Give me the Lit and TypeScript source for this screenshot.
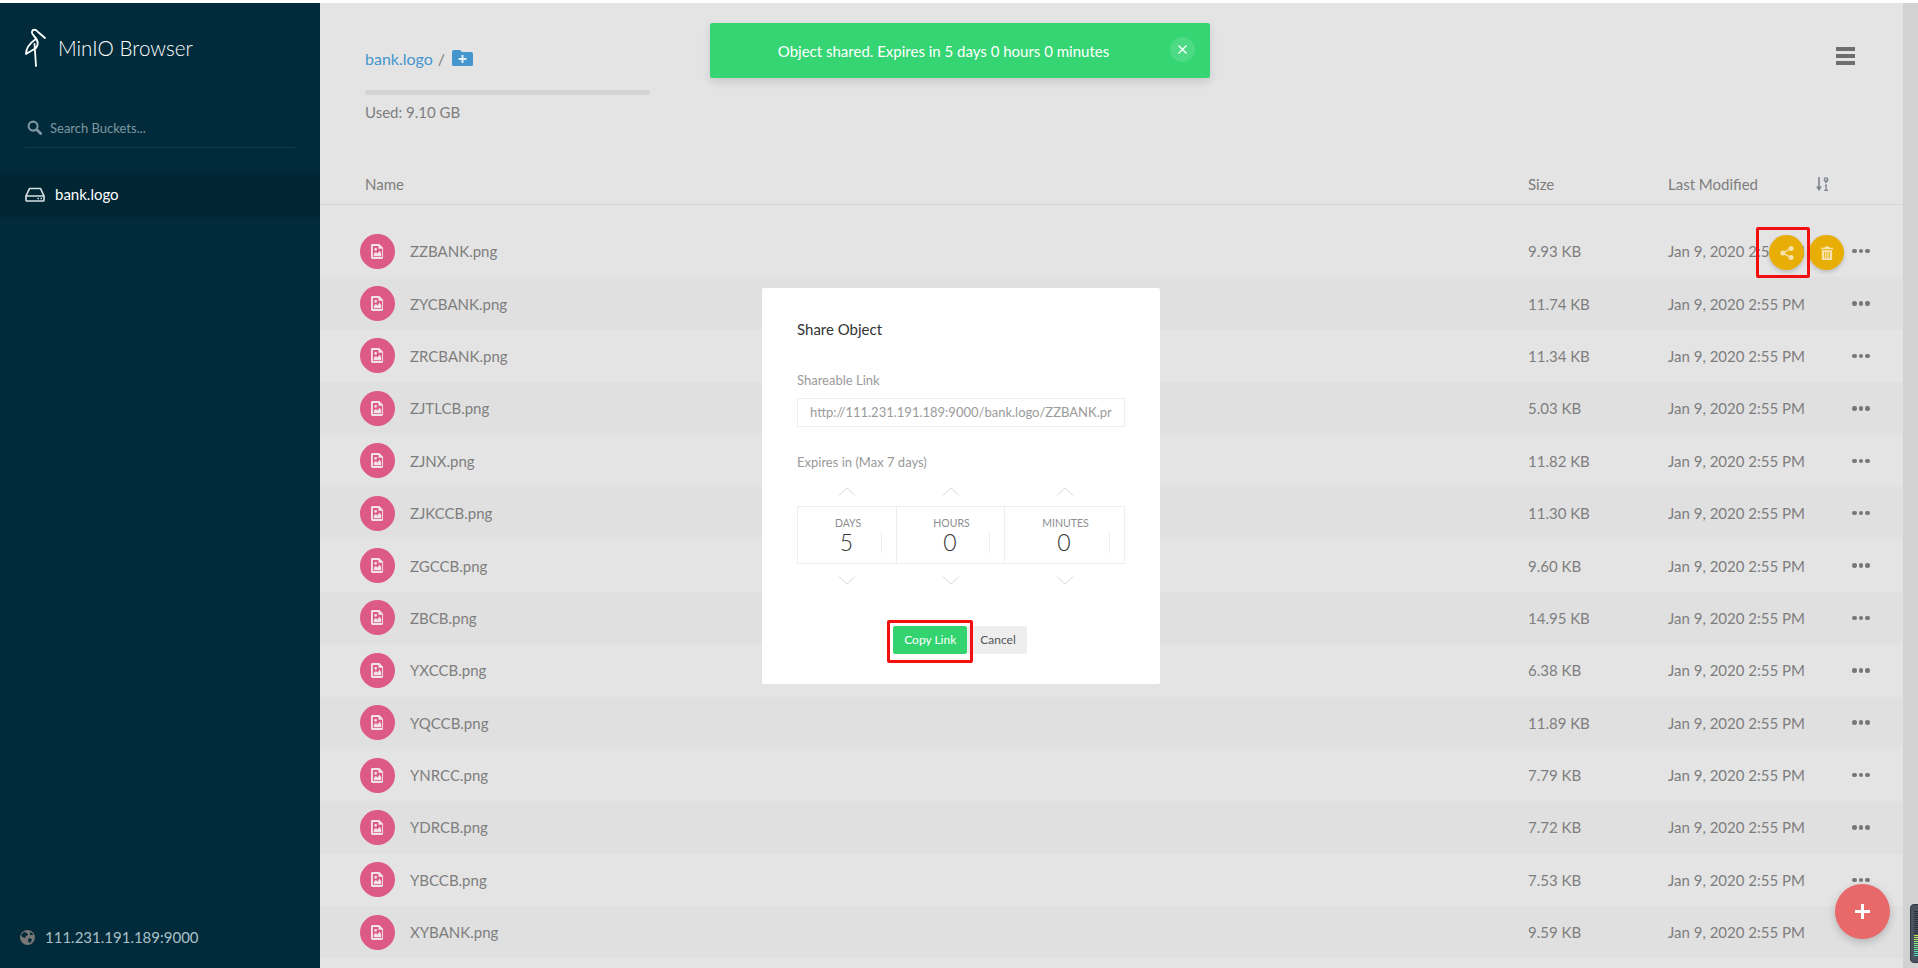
import { LitElement, css, html, svg } from "lit";
import { customElement } from "lit/decorators.js";

const FILES: [string, string][] = [
	["ZZBANK.png", "9.93 KB"],
	["ZYCBANK.png", "11.74 KB"],
	["ZRCBANK.png", "11.34 KB"],
	["ZJTLCB.png", "5.03 KB"],
	["ZJNX.png", "11.82 KB"],
	["ZJKCCB.png", "11.30 KB"],
	["ZGCCB.png", "9.60 KB"],
	["ZBCB.png", "14.95 KB"],
	["YXCCB.png", "6.38 KB"],
	["YQCCB.png", "11.89 KB"],
	["YNRCC.png", "7.79 KB"],
	["YDRCB.png", "7.72 KB"],
	["YBCCB.png", "7.53 KB"],
	["XYBANK.png", "9.59 KB"],
];

const fileIcon = svg`<svg class="file-icon" viewBox="0 0 14 16"><path fill="#f3e3e9" fill-rule="evenodd" d="M1.5 0H9l4 4v10.5a1.5 1.5 0 0 1-1.5 1.5h-10A1.5 1.5 0 0 1 0 14.5v-13A1.5 1.5 0 0 1 1.5 0zM2 2v12h10V5H8V2zM3 13v-2.5l2.2-2 2 1.6 2-3.1 1.8 3V13zM5 4.2a1.5 1.5 0 1 1 0 3 1.5 1.5 0 0 1 0-3z"/></svg>`;

const chevron = (up: boolean) =>
	svg`<svg class="chevron" viewBox="0 0 18 9"><path fill="none" stroke="#dcdcdc" stroke-width="1" d=${up ? "M1 8.5L9 1l8 7.5" : "M1 .5L9 8l8-7.5"}/></svg>`;

@customElement("app-root")
export class AppRoot extends LitElement {
	static override styles = css`
		:host {
			display: block;
			position: relative;
			height: 968px;
			overflow: hidden;
			background: #fff;
			font-family: Lato, "Open Sans", sans-serif;
			font-size: 15px;
			color: #7e7e7e;
		}
		.page {
			display: flex;
			height: 965px;
			margin-top: 3px;
		}

		/* sidebar */
		.sidebar {
			width: 320px;
			flex: none;
			display: flex;
			flex-direction: column;
			background: #012b3a;
		}
		.brand {
			display: flex;
			align-items: center;
			gap: 12px;
			height: 40px;
			margin: 25px 0 0 25px;
			color: #fff;
			font-size: 20.6px;
			font-weight: 300;
		}
		.brand svg {
			width: 21px;
			height: 40px;
		}
		.search {
			display: flex;
			align-items: center;
			gap: 8px;
			height: 39px;
			margin: 40px 25px 0;
			padding-left: 2px;
			border-bottom: 1px solid #123c4b;
			color: #7f98a1;
			font-size: 13px;
		}
		.search svg {
			width: 15px;
			height: 15px;
		}
		.bucket {
			display: flex;
			align-items: center;
			gap: 10px;
			height: 44px;
			margin-top: 25px;
			padding: 0 0 2px 25px;
			box-sizing: border-box;
			background: #002634;
			color: #fff;
			font-size: 15px;
		}
		.bucket svg {
			width: 20px;
			height: 15px;
		}
		.host {
			display: flex;
			align-items: center;
			gap: 10px;
			margin: auto 0 22px 20px;
			color: #a9c0c9;
			font-size: 15px;
		}
		.host svg {
			width: 15px;
			height: 15px;
		}

		/* main column */
		.main {
			flex: 1;
			min-width: 0;
			background: #e4e4e4;
		}
		.scrollbar {
			width: 15px;
			flex: none;
			background: #d2d2d2;
		}
		.top {
			display: flex;
			justify-content: space-between;
			height: 145px;
			padding: 0 48px 0 45px;
		}
		.path {
			display: flex;
			align-items: center;
			gap: 5px;
			height: 24px;
			margin-top: 43px;
			font-size: 16px;
			color: #4696ce;
		}
		.path span {
			color: #7e7e7e;
		}
		.path svg {
			width: 21px;
			height: 16px;
			margin-left: 2px;
		}
		.usage-bar {
			width: 285px;
			height: 5px;
			margin-top: 20px;
			border-radius: 2px;
			background: #d4d4d4;
		}
		.usage-text {
			margin-top: 8px;
			font-size: 15px;
		}
		.burger {
			display: flex;
			flex-direction: column;
			gap: 3px;
			margin-top: 44px;
		}
		.burger i {
			display: block;
			width: 19px;
			height: 4px;
			background: #6e6e6e;
		}
		.cols,
		.row {
			display: grid;
			grid-template-columns: 1168px 140px 184px 1fr;
			align-items: center;
		}
		.cols {
			height: 57px;
			padding: 15px 0 0 45px;
			box-sizing: border-box;
			grid-template-columns: 1163px 140px 148px 1fr;
			border-bottom: 1px solid #d6d6d6;
		}
		.cols svg {
			width: 13px;
			height: 14px;
		}
		.list {
			padding-top: 20px;
		}
		.row {
			height: 52.4px;
			padding-left: 40px;
		}
		.row:nth-child(even) {
			background: #e0e0e0;
		}
		.name {
			display: flex;
			align-items: center;
			gap: 15px;
		}
		.avatar {
			width: 35px;
			height: 35px;
			border-radius: 50%;
			background: #dc5a85;
			display: flex;
			align-items: center;
			justify-content: center;
		}
		.file-icon {
			width: 13px;
			height: 15px;
		}
		.dots {
			display: flex;
			gap: 2px;
		}
		.dots i {
			display: block;
			width: 4.5px;
			height: 4.5px;
			border-radius: 50%;
			background: #777;
		}

		/* things lying over the page */
		.actions {
			position: absolute;
			top: 235px;
			left: 1769px;
			display: flex;
			gap: 5px;
		}
		.actions span {
			width: 35px;
			height: 35px;
			border-radius: 50%;
			background: #e8ae06;
			box-shadow: 0 2px 4px rgba(0, 0, 0, 0.18);
			display: flex;
			align-items: center;
			justify-content: center;
		}
		.actions svg {
			width: 14px;
			height: 14px;
		}
		.toast {
			position: absolute;
			left: 710px;
			top: 23px;
			width: 500px;
			height: 55px;
			box-sizing: border-box;
			padding-right: 33px;
			display: flex;
			align-items: center;
			justify-content: center;
			border-radius: 2px;
			background: #35d574;
			box-shadow: 0 4px 8px rgba(0, 0, 0, 0.12);
			color: #fff;
			font-size: 15px;
		}
		.toast b {
			position: absolute;
			right: 15px;
			top: 14px;
			width: 25px;
			height: 25px;
			border-radius: 50%;
			background: #4cda84;
			display: flex;
			align-items: center;
			justify-content: center;
		}
		.toast svg {
			width: 9px;
			height: 9px;
		}
		.modal {
			position: absolute;
			left: 762px;
			top: 288px;
			width: 398px;
			height: 396px;
			box-sizing: border-box;
			padding: 32px 35px 0;
			border-radius: 2px;
			background: #fff;
			font-size: 13px;
			color: #9a9a9a;
		}
		.modal h4 {
			margin: 0;
			height: 18px;
			line-height: 18px;
			font-size: 15px;
			font-weight: 400;
			color: #333;
		}
		.label {
			margin-top: 34px;
			line-height: 16px;
		}
		.link {
			height: 29px;
			margin-top: 10px;
			box-sizing: border-box;
			padding: 0 12px;
			border: 1px solid #eee;
			line-height: 27px;
			font-size: 13px;
			white-space: nowrap;
		}
		.link + .label {
			margin-top: 27px;
		}
		.picker {
			display: grid;
			grid-template-columns: 100px 108px 120px;
			margin-top: 17px;
		}
		.chevron {
			display: block;
			width: 18px;
			height: 9px;
			margin: 0 auto;
		}
		.cell {
			height: 58px;
			margin: 10px 0 12px;
			box-sizing: border-box;
			border: 1px solid #eee;
			border-left-width: 0;
			text-align: center;
			position: relative;
		}
		.picker > div:first-child .cell {
			border-left-width: 1px;
		}
		.cell small {
			display: block;
			margin-top: 10px;
			padding-left: 2px;
			line-height: 13px;
			font-size: 10.5px;
			color: #8e8e8e;
		}
		.cell strong {
			display: block;
			padding-right: 1px;
			line-height: 24px;
			font-size: 23px;
			font-weight: 300;
			color: #333;
		}
		.cell::after {
			content: "";
			position: absolute;
			right: 14px;
			top: 25px;
			height: 21px;
			border-right: 1px solid #eee;
		}
		.buttons {
			display: flex;
			justify-content: center;
			margin: 41px 0 0 -2px;
		}
		.buttons span {
			height: 28px;
			line-height: 28px;
			padding: 0 11px;
			font-size: 12px;
			border-radius: 2px;
		}
		.buttons .cancel {
			padding-left: 13px;
		}
		.copy {
			background: #33d46f;
			color: #fff;
		}
		.cancel {
			background: #eee;
			color: #545454;
		}
		.mark {
			position: absolute;
			box-sizing: border-box;
			border: 3px solid #f40f0f;
			border-radius: 2px;
		}
		.mark.share {
			left: 1756px;
			top: 227px;
			width: 54px;
			height: 51px;
		}
		.mark.copy-mark {
			left: 887px;
			top: 620px;
			width: 86px;
			height: 43px;
		}
		.fab {
			position: absolute;
			left: 1835px;
			top: 884px;
			width: 55px;
			height: 55px;
			border-radius: 50%;
			background: #e9686a;
			box-shadow: 0 3px 8px rgba(0, 0, 0, 0.2);
			display: flex;
			align-items: center;
			justify-content: center;
		}
		.fab svg {
			width: 15px;
			height: 15px;
		}
		.widget {
			position: absolute;
			left: 1910px;
			top: 904px;
			width: 12px;
			height: 59px;
			box-sizing: border-box;
			padding: 5px 0 6px 3px;
			border: 1px solid #343a44;
			border-radius: 4px;
			background: #4a525e;
		}
		.widget i {
			display: block;
			height: 100%;
			background:
				repeating-linear-gradient(#4a525e 0 1px, transparent 1px 2px),
				linear-gradient(#2c313a 0 52%, #d8e84a 52%, #7de88a 76%, #3fd8c8 100%);
		}
	`;

	override render() {
		return html`
			<div class="page">
				<aside class="sidebar">
					<div class="brand">
						<svg viewBox="0 0 21 40">
							<path
								fill="none"
								stroke="#fff"
								stroke-width="1.8"
								stroke-linecap="round"
								stroke-linejoin="round"
								d="M8 2c3-1 4 1 5 2l7 6M8 2c-2 2-1 4 1 6 4 4 5 8 2 12L1 26c0-5 4-11 10-15M9.5 16l1.5 22"
							/>
						</svg>
						MinIO Browser
					</div>
					<div class="search">
						<svg viewBox="0 0 16 16">
							<circle
								cx="6.5"
								cy="6.5"
								r="4.8"
								fill="none"
								stroke="#7f98a1"
								stroke-width="2.2"
							/>
							<path stroke="#7f98a1" stroke-width="3" stroke-linecap="round" d="M10.5 10.5L14.5 14.5" />
						</svg>
						Search Buckets...
					</div>
					<div class="bucket">
						<svg viewBox="0 0 20 15">
							<path
								fill="none"
								stroke="#d5e0e4"
								stroke-width="1.7"
								stroke-linejoin="round"
								d="M1 9l3.5-7.5h11L19 9v4a1 1 0 0 1-1 1H2a1 1 0 0 1-1-1zM1 9h18"
							/>
							<path stroke="#d5e0e4" stroke-width="1.5" d="M12.5 11.500h1.500M15.500 11.500h1.500" />
						</svg>
						bank.logo
					</div>
					<div class="host">
						<svg viewBox="0 0 15 15">
							<circle cx="7.5" cy="7.5" r="7.5" fill="#777" />
							<path fill="#012b3a" d="M4 2l3 1 1 2-2 1-1 2-3-1-1-2zM9 8l3 1-1 3-2 1-1-3zM10 2l3 2 0 1-3 0z" />
						</svg>
						111.231.191.189:9000
					</div>
				</aside>
				<main class="main">
					<div class="top">
						<div>
							<div class="path">
								bank.logo <span>/</span>
								<svg viewBox="0 0 21 16">
									<path fill="#4696ce" d="M0 2a2 2 0 0 1 2-2h6l2 2h9a2 2 0 0 1 2 2v10.500a1.500 1.500 0 0 1-1.500 1.500h-18A1.500 1.500 0 0 1 0 14.500z" />
									<path stroke="#e4eef6" stroke-width="2" d="M10.500 5v8M6.500 9h8" />
								</svg>
							</div>
							<div class="usage-bar"></div>
							<div class="usage-text">Used: 9.10 GB</div>
						</div>
						<div class="burger"><i></i><i></i><i></i></div>
					</div>
					<div class="cols">
						<span>Name</span>
						<span>Size</span>
						<span>Last Modified</span>
						<svg viewBox="0 0 13 14">
							<path stroke="#7d838a" stroke-width="1.6" d="M3 0v12" />
							<path fill="#7d838a" d="M0 9.500h6L3 14z" />
							<circle cx="10" cy="2.500" r="1.700" fill="none" stroke="#7d838a" stroke-width="1.300" />
							<path fill="none" stroke="#7d838a" stroke-width="1.300" d="M11.500 2.500c0 1.500-.8 2.600-2.500 3.200" />
							<path fill="none" stroke="#7d838a" stroke-width="1.300" d="M8.800 8.500l1.300-.6V13M8.200 13.300h3.800" />
						</svg>
					</div>
					<div class="list">
						${FILES.map(
							([name, size]) => html`
								<div class="row">
									<div class="name">
										<span class="avatar">${fileIcon}</span>
										${name}
									</div>
									<div>${size}</div>
									<div>Jan 9, 2020 2:55 PM</div>
									<div class="dots"><i></i><i></i><i></i></div>
								</div>
							`,
						)}
					</div>
				</main>
				<div class="scrollbar"></div>
			</div>

			<div class="actions">
				<span>
					<svg viewBox="0 0 14 14">
						<path fill="none" stroke="#f7e3ad" stroke-width="1.4" d="M10.500 2.500L3 7l7.500 4.500" />
						<circle cx="11" cy="2.600" r="2.500" fill="#f7e3ad" />
						<circle cx="2.800" cy="7" r="2.500" fill="#f7e3ad" />
						<circle cx="11" cy="11.400" r="2.500" fill="#f7e3ad" />
					</svg>
				</span>
				<span>
					<svg viewBox="0 0 15 15">
						<path
							fill="#f7e3ad"
							fill-rule="evenodd"
							d="M1 2h3.800l.7-1.500h4l.7 1.500H14v1.500H1zM2 4.500h11V14a1 1 0 0 1-1 1H3a1 1 0 0 1-1-1zM4.500 6.500v6.500h1V6.500zM7 6.500v6.500h1V6.500zM9.500 6.500v6.500h1V6.500z"
						/>
					</svg>
				</span>
			</div>

			<div class="toast">
				Object shared. Expires in 5 days 0 hours 0 minutes
				<b>
					<svg viewBox="0 0 9 9">
						<path stroke="#fff" stroke-width="1.3" d="M.5.5l8 8M8.500.5l-8 8" />
					</svg>
				</b>
			</div>

			<div class="modal">
				<h4>Share Object</h4>
				<div class="label">Shareable Link</div>
				<div class="link">http://111.231.191.189:9000/bank.logo/ZZBANK.pr</div>
				<div class="label">Expires in (Max 7 days)</div>
				<div class="picker">
					${[
						["DAYS", "5"],
						["HOURS", "0"],
						["MINUTES", "0"],
					].map(
						([label, value]) => html`
							<div>
								${chevron(true)}
								<div class="cell">
									<small>${label}</small>
									<strong>${value}</strong>
								</div>
								${chevron(false)}
							</div>
						`,
					)}
				</div>
				<div class="buttons">
					<span class="copy">Copy Link</span>
					<span class="cancel">Cancel</span>
				</div>
			</div>

			<div class="mark share"></div>
			<div class="mark copy-mark"></div>

			<div class="fab">
				<svg viewBox="0 0 15 15">
					<path stroke="#fff" stroke-width="3" d="M7.500 0v15M0 7.500h15" />
				</svg>
			</div>
			<div class="widget"><i></i></div>
		`;
	}
}
